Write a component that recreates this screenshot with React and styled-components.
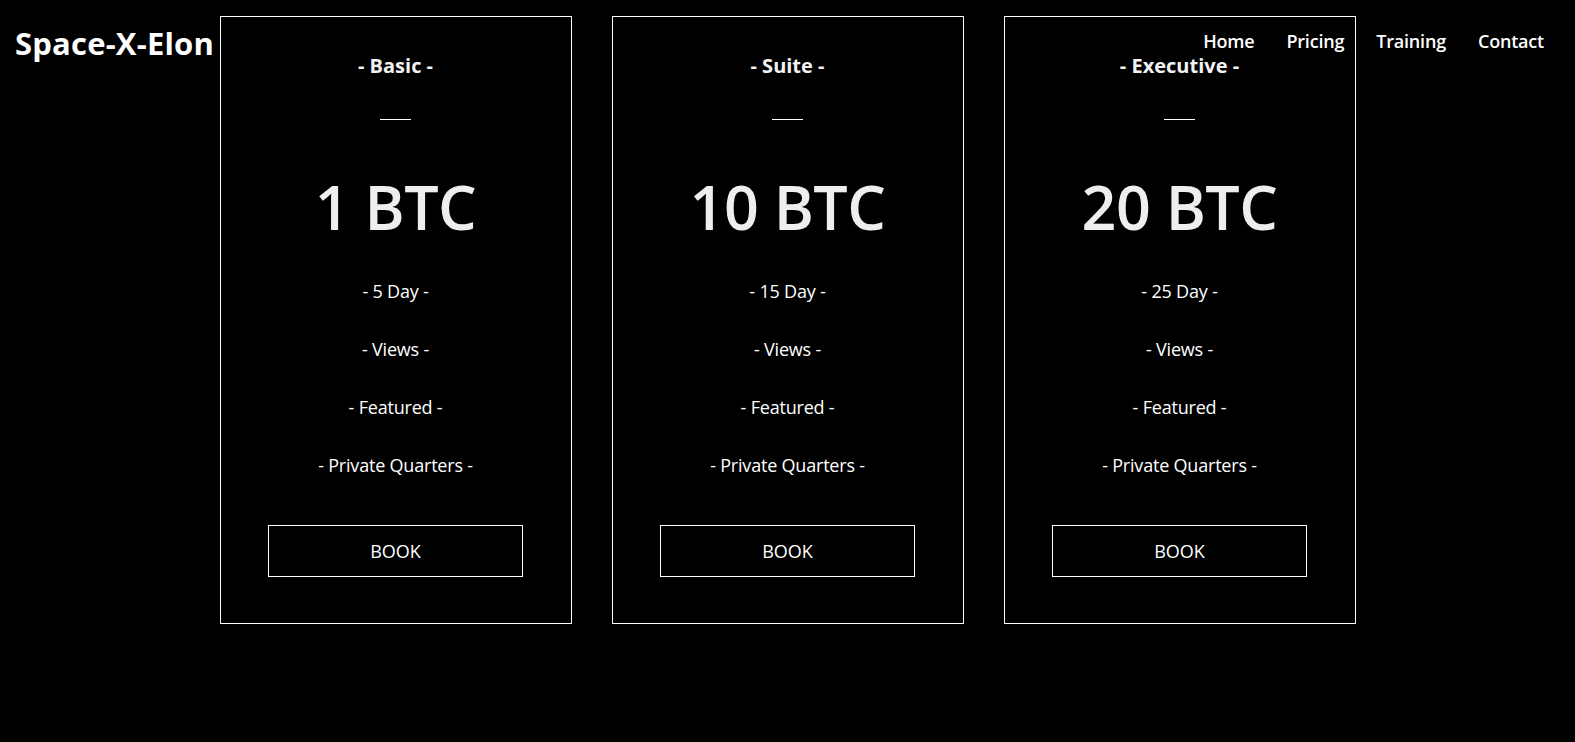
import React from 'react';
import styled, { createGlobalStyle } from 'styled-components';

const GlobalStyle = createGlobalStyle`
    html, body {
        margin: 0;
        padding: 0;
        background: #000;
        color: #fff;
        font-family: "Open Sans", "Noto Sans", sans-serif;
    }
`;

const Page = styled.div`
    position: relative;
    height: 100vh;
    overflow: hidden;
    padding-top: 16px;
    box-sizing: border-box;
`;

const Header = styled.header`
    position: absolute;
    top: 0;
    left: 0;
    right: 0;
    display: flex;
    justify-content: space-between;
    align-items: flex-start;
    padding: 23px 31px 0 15px;
    pointer-events: none;
`;

const Logo = styled.h1`
    margin: 0;
    font-size: 31px;
    font-weight: 700;
    line-height: 40px;
    letter-spacing: 0.2px;
`;

const Nav = styled.nav`
    display: flex;
    gap: 32px;
    padding-top: 6px;
`;

const NavLink = styled.a`
    color: #fff;
    text-decoration: none;
    font-size: 18px;
    font-weight: 600;
    line-height: 24px;
    letter-spacing: -0.2px;
`;

const Cards = styled.div`
    display: flex;
    justify-content: center;
    gap: 40px;
`;

const Card = styled.section`
    width: 352px;
    height: 608px;
    box-sizing: border-box;
    border: 1px solid #fff;
    display: flex;
    flex-direction: column;
    align-items: center;
    padding-top: 36px;
`;

const Title = styled.h2`
    margin: 0;
    font-size: 20px;
    font-weight: 700;
    line-height: 26px;
    color: #f2f2f2;
`;

const Rule = styled.hr`
    width: 31px;
    border: none;
    border-top: 1px solid #fff;
    margin: 40px 0 0;
`;

const Price = styled.div`
    margin-top: 45px;
    font-size: 61px;
    font-weight: 600;
    line-height: 84px;
    letter-spacing: -0.5px;
    color: #eee;
`;

const Features = styled.ul`
    list-style: none;
    margin: 30px 0 0;
    padding: 0;
    display: flex;
    flex-direction: column;
    align-items: center;
    gap: 33px;
`;

const Feature = styled.li`
    font-size: 18px;
    line-height: 25px;
    letter-spacing: -0.2px;
`;

const BookButton = styled.button`
    margin-top: 47px;
    width: 255px;
    height: 52px;
    background: transparent;
    border: 1px solid #fff;
    color: #fff;
    font-family: inherit;
    font-size: 18px;
    cursor: pointer;
`;

const plans = [
    { name: 'Basic', price: '1 BTC', days: '5 Day' },
    { name: 'Suite', price: '10 BTC', days: '15 Day' },
    { name: 'Executive', price: '20 BTC', days: '25 Day' },
];

export default function App() {
    return (
        <Page>
            <GlobalStyle />
            <Cards>
                {plans.map((plan) => (
                    <Card key={plan.name}>
                        <Title>- {plan.name} -</Title>
                        <Rule />
                        <Price>{plan.price}</Price>
                        <Features>
                            <Feature>- {plan.days} -</Feature>
                            <Feature>- Views -</Feature>
                            <Feature>- Featured -</Feature>
                            <Feature>- Private Quarters -</Feature>
                        </Features>
                        <BookButton>BOOK</BookButton>
                    </Card>
                ))}
            </Cards>
            <Header>
                <Logo>Space-X-Elon</Logo>
                <Nav>
                    <NavLink href="#">Home</NavLink>
                    <NavLink href="#">Pricing</NavLink>
                    <NavLink href="#">Training</NavLink>
                    <NavLink href="#">Contact</NavLink>
                </Nav>
            </Header>
        </Page>
    );
}
